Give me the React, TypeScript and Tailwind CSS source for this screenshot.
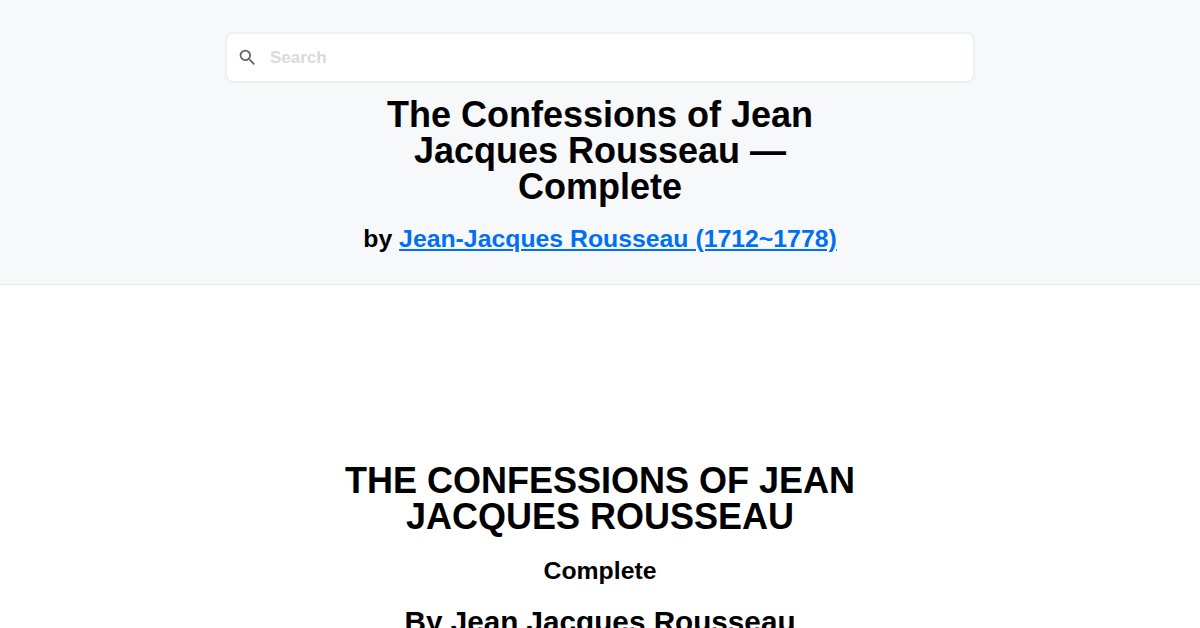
export default function App() {
  return (
    <div className="h-[628px] overflow-hidden bg-white text-black font-['Liberation_Sans',Arial,sans-serif]">
      <header className="h-[285px] bg-[#f7f8fa] border-b border-[#e5e7eb] flex flex-col items-center pt-[32px]">
        <div className="relative w-[750px] h-[51px] shrink-0 bg-white border-2 border-[#eeeff2] rounded-lg flex items-center pl-[43px]">
          <svg className="absolute left-[10px] top-[13px]" width="21" height="21" viewBox="0 0 24 24" fill="#666">
            <path d="M15.5 14h-.79l-.28-.27A6.471 6.471 0 0 0 16 9.5 6.5 6.5 0 1 0 9.5 16c1.61 0 3.09-.59 4.23-1.57l.27.28v.79l5 4.99L20.49 19l-4.99-5zm-6 0C7.01 14 5 11.99 5 9.5S7.01 5 9.5 5 14 7.01 14 9.5 11.99 14 9.5 14z" />
          </svg>
          <span className="text-[17px] font-bold text-[#dadada]">Search</span>
        </div>
        <h1 className="mt-[14px] w-[500px] text-center text-[36px] leading-[36px] font-bold">The Confessions of Jean Jacques Rousseau — Complete</h1>
        <p className="mt-[16px] text-[24.8px] leading-[36px] font-bold">by <a className="text-[#0070f3] underline" href="#">Jean-Jacques Rousseau (1712~1778)</a></p>
      </header>
      <main className="flex flex-col items-center pt-[178px]">
        <h2 className="w-[600px] text-center text-[36px] leading-[36px] font-bold">THE CONFESSIONS OF JEAN JACQUES ROUSSEAU</h2>
        <h3 className="mt-[18px] text-[24.8px] leading-[36px] font-bold">Complete</h3>
        <h2 className="mt-[15px] text-[29.7px] leading-[36px] font-bold whitespace-nowrap">By Jean Jacques Rousseau</h2>
      </main>
    </div>
  );
}
